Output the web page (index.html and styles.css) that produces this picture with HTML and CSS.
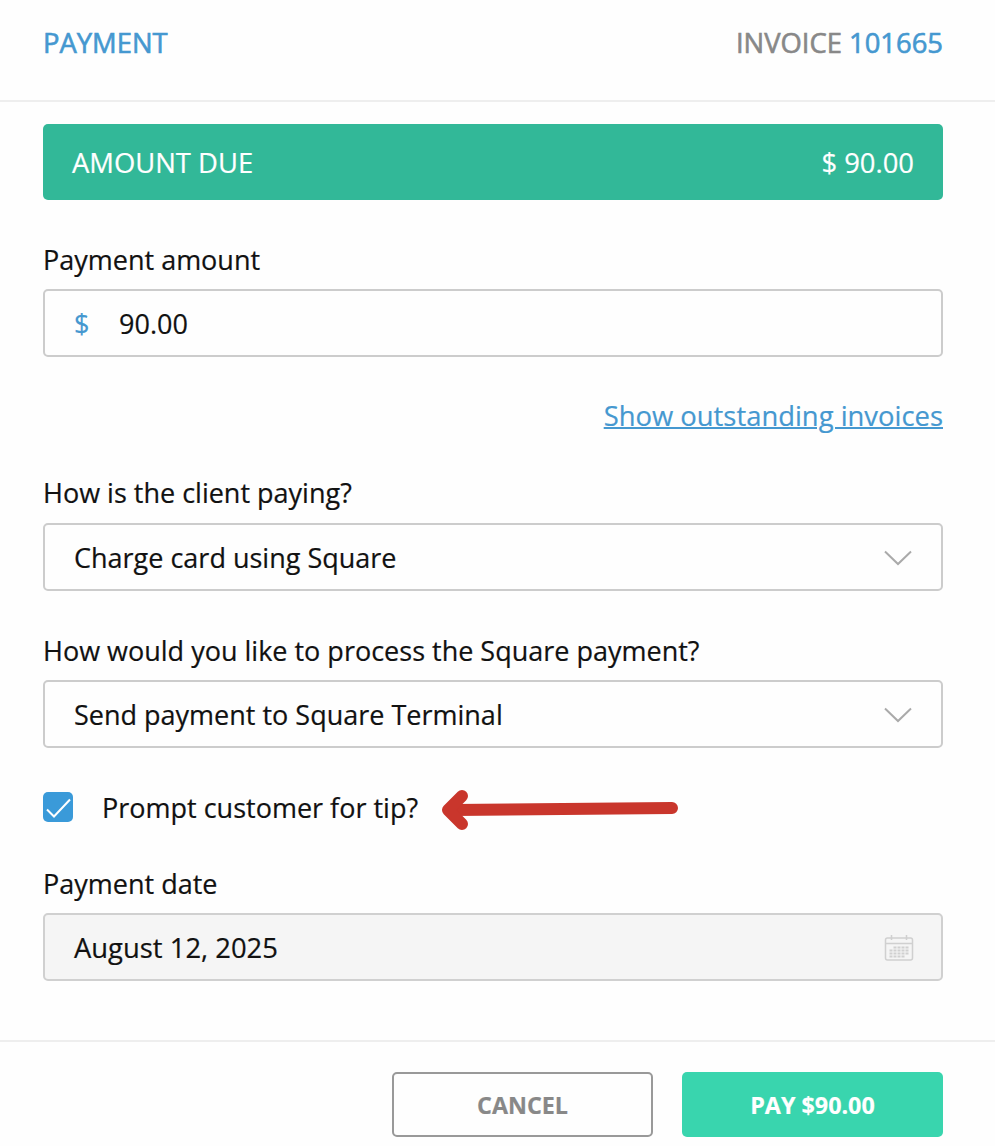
FILE: index.html
```
<!DOCTYPE html>
<html lang="en">
<head>
    <meta charset="UTF-8">
    <meta name="viewport" content="width=device-width, initial-scale=1.0">
    <title>Payment</title>
    <link rel="stylesheet" href="styles.css">
</head>
<body>
    <header class="header">
        <div class="title">PAYMENT</div>
        <div class="invoice">INVOICE <span class="invoice-number">101665</span></div>
    </header>
    <main class="content">
        <div class="amount-due">
            <span>AMOUNT DUE</span>
            <span>$ 90.00</span>
        </div>
        <div class="group">
            <div class="label">Payment amount</div>
            <div class="field">
                <span class="currency">$</span>
                <span class="value">90.00</span>
            </div>
        </div>
        <div class="link-row">
            <a class="link" href="#">Show outstanding invoices</a>
        </div>
        <div class="group">
            <div class="label">How is the client paying?</div>
            <div class="field">
                <span class="value">Charge card using Square</span>
                <svg class="chevron" width="28" height="16" viewBox="0 0 28 16"><path d="M1 1.5L14 14L27 1.5"/></svg>
            </div>
        </div>
        <div class="group">
            <div class="label">How would you like to process the Square payment?</div>
            <div class="field">
                <span class="value">Send payment to Square Terminal</span>
                <svg class="chevron" width="28" height="16" viewBox="0 0 28 16"><path d="M1 1.5L14 14L27 1.5"/></svg>
            </div>
        </div>
        <div class="tip-row">
            <span class="checkbox">
                <svg width="30" height="30" viewBox="0 0 30 30"><path d="M4 17.5L11 24.5L27 7.5"/></svg>
            </span>
            <span class="tip-label">Prompt customer for tip?</span>
            <svg class="arrow" width="238" height="42" viewBox="0 0 238 42">
                <path d="M12 22L231 20"/>
                <path d="M21 8L7 22L21 36"/>
            </svg>
        </div>
        <div class="group">
            <div class="label">Payment date</div>
            <div class="field disabled">
                <span class="value date">August 12, 2025</span>
                <svg class="calendar" width="30" height="28" viewBox="0 0 30 28">
                    <path d="M3.500 4H26.500Q28.500 4 28.500 6V24Q28.500 26 26.500 26H3.500Q1.500 26 1.500 24V6Q1.500 4 3.500 4ZM1.500 9.500H28.500M7.500 1V6M22.500 1V6"/>
                    <path class="days" d="M9.500 13.500H25M5.500 16.500H25M5.500 19.500H25M5.500 22.500H21"/>
                </svg>
            </div>
        </div>
    </main>
    <footer class="footer">
        <button class="btn cancel">CANCEL</button>
        <button class="btn pay">PAY $90.00</button>
    </footer>
</body>
</html>
```
FILE: styles.css
```
* {
    box-sizing: border-box;
}
body {
    margin: 0;
    height: 1146px;
    overflow: hidden;
    background: #fefefe;
    color: #111;
    font-family: "Open Sans", sans-serif;
    font-size: 27px;
    line-height: 38px;
    -webkit-text-stroke: 0.2px;
}
svg {
    display: block;
    fill: none;
    flex-shrink: 0;
}
.header {
    display: flex;
    justify-content: space-between;
    height: 102px;
    padding: 24px 52px 0 43px;
    border-bottom: 2px solid #eee;
    font-size: 27.4px;
    -webkit-text-stroke: 0.6px;
}
.title, .invoice-number {
    color: #4598d0;
}
.invoice {
    color: #888;
}
.content {
    padding: 22px 52px 0 43px;
}
.amount-due {
    display: flex;
    justify-content: space-between;
    align-items: center;
    height: 76px;
    margin-bottom: 41px;
    padding: 2px 29px 0 29px;
    border-radius: 5px;
    background: #32b898;
    color: #fff;
    font-size: 27.4px;
}
.label {
    height: 48px;
}
.field {
    display: flex;
    align-items: center;
    height: 68px;
    padding: 2px 29px 0 29px;
    border: 2px solid #ccc;
    border-radius: 5px;
}
.value {
    flex: 1;
}
.currency {
    width: 45px;
    color: #4598d0;
}
.chevron {
    stroke: #aaa;
    stroke-width: 2;
}
.link-row {
    display: flex;
    justify-content: flex-end;
    padding: 40px 0 39px;
}
.link {
    color: #4598d0;
    font-size: 27.4px;
    text-decoration-thickness: 2px;
}
.group + .group {
    margin-top: 41px;
}
.link-row + .group .label {
    height: 49px;
}
.tip-row {
    display: flex;
    align-items: center;
    height: 42px;
    margin: 39px 0 36px;
}
.checkbox {
    width: 30px;
    height: 30px;
    margin: 0 29px 2px 0;
    border-radius: 5px;
    background: #3a9ad9;
}
.checkbox svg {
    stroke: #fff;
    stroke-width: 2;
}
.arrow {
    margin: 2px 0 0 23px;
    stroke: #c9362c;
    stroke-width: 12;
    stroke-linecap: round;
    stroke-linejoin: round;
}
.disabled {
    padding-right: 27px;
    border-color: #d0d0d0;
    background: #f5f5f5;
}
.date {
    font-size: 27.4px;
}
.calendar {
    stroke: #d0d0d0;
    stroke-width: 1.5;
}
.days {
    stroke-width: 2;
    stroke-dasharray: 3 1;
}
.footer {
    display: flex;
    justify-content: flex-end;
    gap: 29px;
    margin-top: 59px;
    padding: 30px 52px 0 0;
    border-top: 2px solid #eee;
}
.btn {
    width: 261px;
    height: 65px;
    padding: 1px 0 0;
    border: 0;
    border-radius: 5px;
    font-family: inherit;
    font-size: 23.3px;
    font-weight: bold;
}
.cancel {
    border: 2px solid #999;
    background: #fefefe;
    color: #888;
}
.pay {
    background: #39d5ae;
    color: #fff;
}
```
